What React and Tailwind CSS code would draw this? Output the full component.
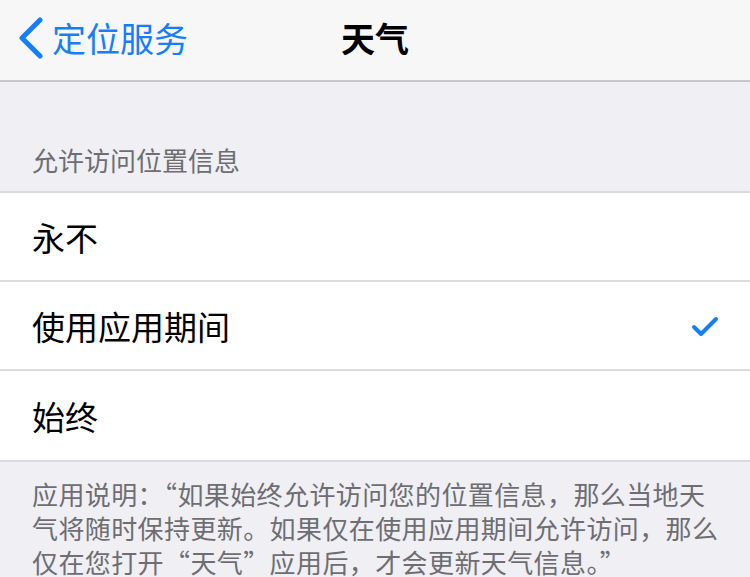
import React from 'react';

const font = { fontFamily: '"Noto Sans CJK SC", "Noto Sans", sans-serif' };

function Row({ label, checked, last }) {
  return (
    <div className="flex h-[89px]">
      <div className={`flex flex-1 items-center justify-between pl-[32px] pr-[32px] ${last ? '' : 'border-b-2 border-[#dcdce0]'}`}>
        <span className="text-[33px] leading-[40px] text-black">{label}</span>
        {checked && (
          <svg width="28" height="22" viewBox="0 0 28 22" className="mr-[-1px]">
            <path d="M3 12 L10 19 L25 4" fill="none" stroke="#157efb" strokeWidth="4" strokeLinecap="round" strokeLinejoin="round" />
          </svg>
        )}
      </div>
    </div>
  );
}

export default function App() {
  return (
    <div className="w-[750px] h-[577px] overflow-hidden bg-[#efeff4]" style={font}>
      <div className="grid grid-cols-[1fr_auto_1fr] items-center h-[82px] bg-[#f7f7f8] border-b-2 border-[#c8c7cc]">
        <div className="flex items-center pl-[18px] pb-[4px]">
          <svg width="26" height="42" viewBox="0 0 26 42">
            <path d="M22 3 L4 21 L22 39" fill="none" stroke="#157efb" strokeWidth="5" strokeLinecap="round" strokeLinejoin="round" />
          </svg>
          <span className="ml-[8px] text-[34px] leading-[40px] text-[#157efb]">定位服务</span>
        </div>
        <div className="text-[34px] leading-[40px] font-semibold text-black pb-[4px]">天气</div>
        <div />
      </div>

      <div className="flex items-end h-[109px] px-[32px] pb-[16px]">
        <span className="text-[26px] leading-[30px] text-[#6d6d72]">允许访问位置信息</span>
      </div>

      <div className="bg-white border-y-2 border-[#dcdce0]">
        <Row label="永不" />
        <Row label="使用应用期间" checked />
        <Row label="始终" last />
      </div>

      <div className="pl-[32px] pt-[15px] text-[26px] tracking-[0.4px] leading-[34px] text-[#6d6d72] whitespace-nowrap">
        <div>应用说明：“如果始终允许访问您的位置信息，那么当地天</div>
        <div>气将随时保持更新。如果仅在使用应用期间允许访问，那么</div>
        <div>仅在您打开“天气”应用后，才会更新天气信息。”</div>
      </div>
    </div>
  );
}
